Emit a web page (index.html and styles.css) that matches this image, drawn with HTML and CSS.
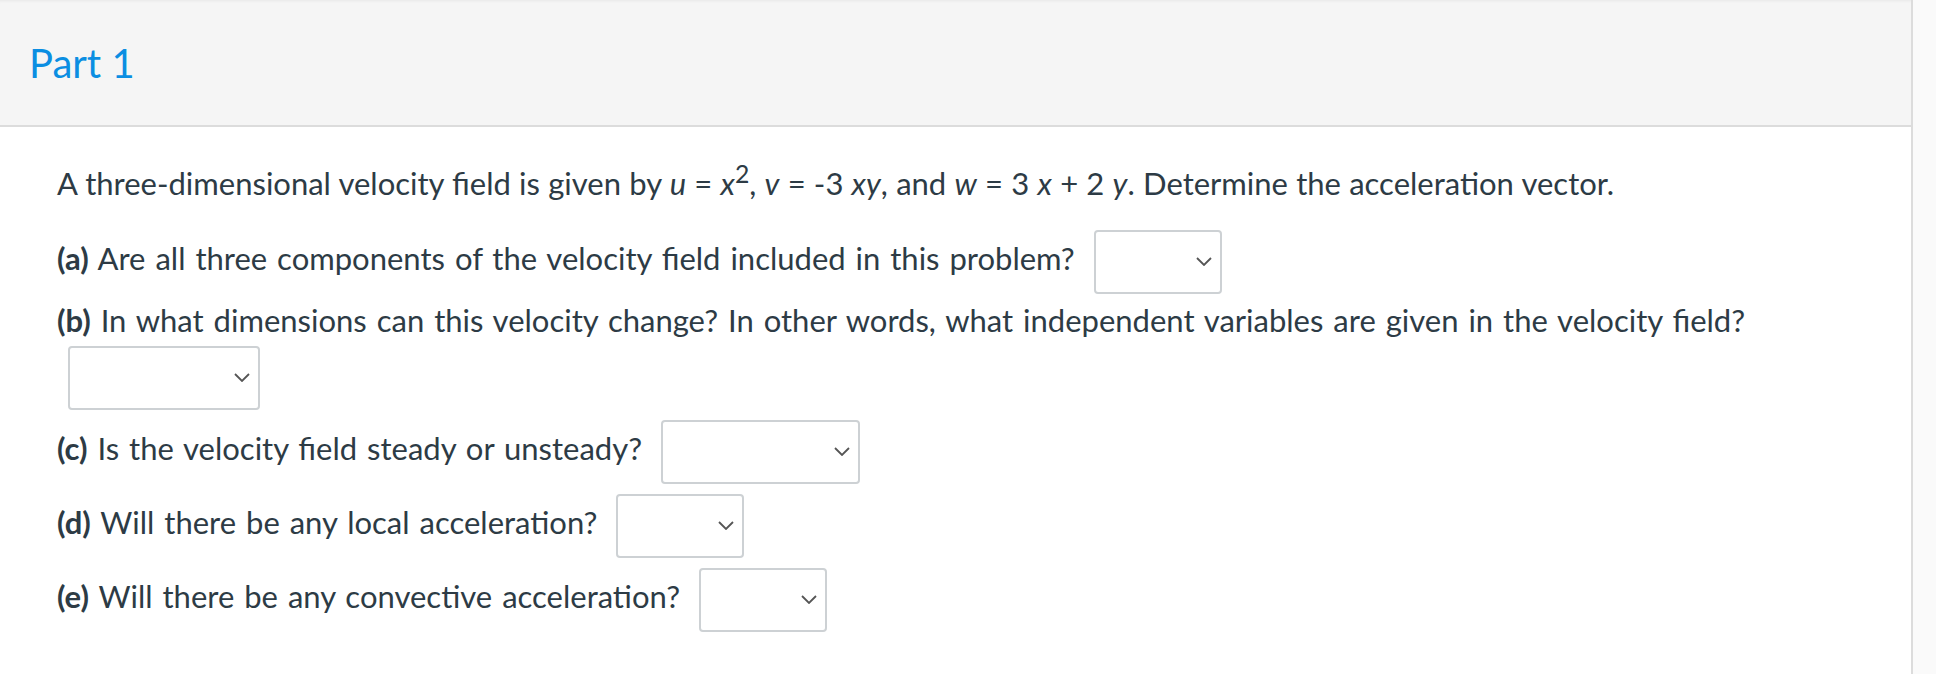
FILE: index.html
```html
<!DOCTYPE html>
<html lang="en">
  <head>
    <meta charset="UTF-8" />
    <title>Part 1</title>
    <link rel="stylesheet" href="styles.css">
  </head>
  <body>
    <div class="page">
      <div class="panel">
        <div class="part-header">
          <h2 class="part-title">Part 1</h2>
        </div>
        <div class="part-body">
          <p class="intro">A three-dimensional velocity field is given by <i>u</i> = <i>x</i><sup>2</sup>, <i>v</i> = -3 <i>xy</i>, and <i>w</i> = 3 <i>x</i> + 2 <i>y</i>. Determine the acceleration vector.</p>

          <p class="q"><strong>(a)</strong> Are all three components of the velocity field included in this problem?
            <span class="dropdown sel-sm"><select><option></option></select><svg class="chevron" viewBox="0 0 16 9"><path d="M1 1l7 7 7-7"/></svg></span>
          </p>

          <p class="q"><strong>(b)</strong> In what dimensions can this velocity change? In other words, what independent variables are given in the velocity field?<br><span class="dropdown sel-md"><select><option></option></select><svg class="chevron" viewBox="0 0 16 9"><path d="M1 1l7 7 7-7"/></svg></span>
          </p>

          <p class="q spaced"><strong>(c)</strong> Is the velocity field steady or unsteady?
            <span class="dropdown sel-lg"><select><option></option></select><svg class="chevron" viewBox="0 0 16 9"><path d="M1 1l7 7 7-7"/></svg></span>
          </p>

          <p class="q spaced"><strong>(d)</strong> Will there be any local acceleration?
            <span class="dropdown sel-sm"><select><option></option></select><svg class="chevron" viewBox="0 0 16 9"><path d="M1 1l7 7 7-7"/></svg></span>
          </p>

          <p class="q spaced"><strong>(e)</strong> Will there be any convective acceleration?
            <span class="dropdown sel-sm"><select><option></option></select><svg class="chevron" viewBox="0 0 16 9"><path d="M1 1l7 7 7-7"/></svg></span>
          </p>
        </div>
      </div>
    </div>
  </body>
</html>
```

FILE: styles.css
```css
body {
  margin: 0;
  padding: 0;
  background-color: #fafafa;
  font-family: Lato, "Open Sans", sans-serif;
  color: #2d3b45;
}
.page {
  display: flex;
  height: 674px;
}
.panel {
  width: 1911px;
  background-color: #fff;
  border-right: 2px solid #dcdcdc;
}

.part-header {
  display: flex;
  align-items: center;
  height: 125px;
  padding-left: 29px;
  background-color: #f5f5f5;
  border-bottom: 2px solid #dcdcdc;
  box-shadow: inset 0 3px 3px -2px rgba(0, 0, 0, 0.06);
}
.part-title {
  margin: 0;
  font-size: 40px;
  font-weight: normal;
  line-height: 1.2;
  color: #0b8ee2;
}

.part-body {
  padding: 30px 20px 0 57px;
  font-size: 31px;
  line-height: 52px;
}
.part-body p {
  margin: 0;
}
.intro {
  margin-bottom: 21px !important;
  word-spacing: 0.3px;
}
.part-body sup {
  font-size: 0.8em;
  line-height: 0;
  vertical-align: 0.5em;
}
.part-body strong {
  font-weight: bold;
}
.q {
  word-spacing: 2px;
}
.q.spaced {
  margin-top: 10px;
}

.dropdown {
  position: relative;
  display: inline-block;
  vertical-align: middle;
  margin-left: 9px;
  height: 64px;
}
br + .dropdown {
  margin-left: 11px;
}
.dropdown select {
  display: block;
  width: 100%;
  height: 64px;
  margin: 0;
  -webkit-appearance: none;
  appearance: none;
  background-color: #fff;
  border: 2px solid #cdd1d4;
  border-radius: 4px;
  font: inherit;
}
.sel-sm {
  width: 128px;
}
.sel-md {
  width: 192px;
}
.sel-lg {
  width: 199px;
}
.chevron {
  position: absolute;
  right: 10px;
  top: 27px;
  width: 16px;
  height: 9px;
  fill: none;
  stroke: #555;
  stroke-width: 1.8;
  pointer-events: none;
}
```
